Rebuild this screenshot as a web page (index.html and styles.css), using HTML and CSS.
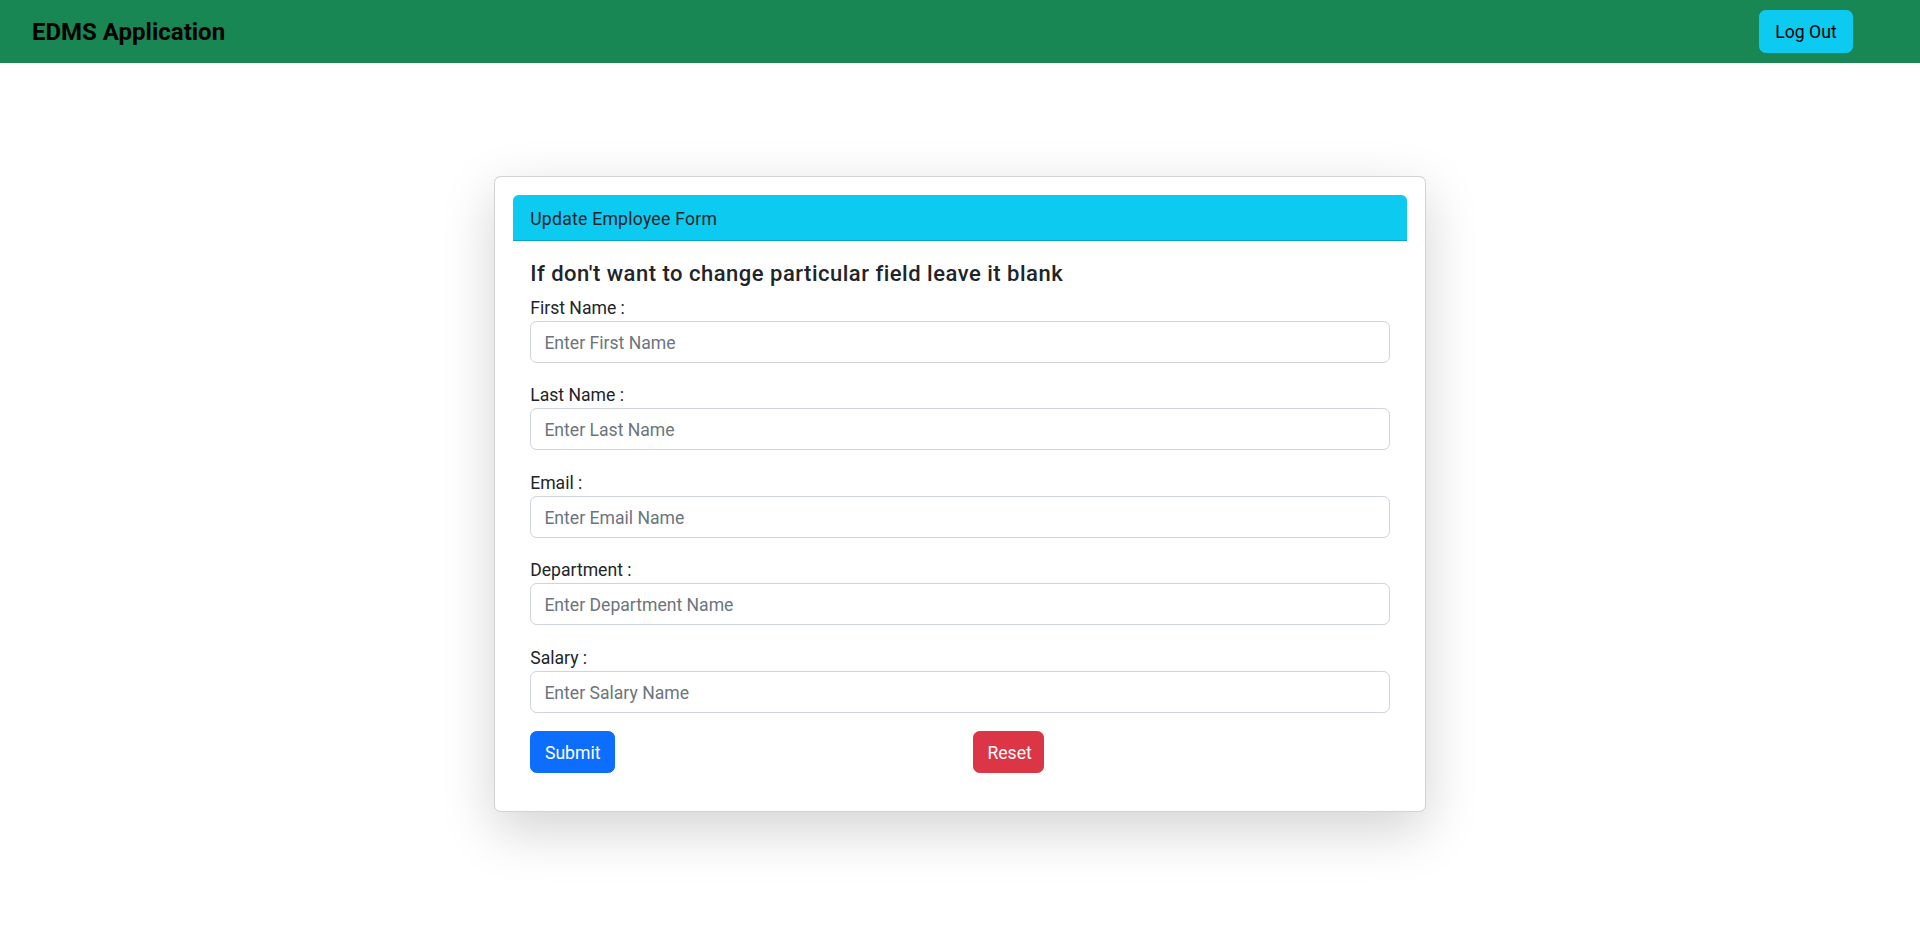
FILE: index.html
```html
<!DOCTYPE html>
<html lang="en">
<head>
<meta charset="utf-8">
<title>EDMS Application</title>
<link rel="stylesheet" href="styles.css">
</head>
<body>
<nav class="navbar">
  <span class="brand">EDMS Application</span>
  <button class="btn btn-info" type="button">Log Out</button>
</nav>
<main class="page">
  <section class="card">
    <div class="card-header">Update Employee Form</div>
    <form class="card-body">
      <h5 class="note">If don't want to change particular field leave it blank</h5>
      <div class="field">
        <label class="label" for="fn">First Name :</label>
        <input class="input" id="fn" type="text" placeholder="Enter First Name">
      </div>
      <div class="field">
        <label class="label" for="ln">Last Name :</label>
        <input class="input" id="ln" type="text" placeholder="Enter Last Name">
      </div>
      <div class="field">
        <label class="label" for="em">Email :</label>
        <input class="input" id="em" type="text" placeholder="Enter Email Name">
      </div>
      <div class="field">
        <label class="label" for="dp">Department :</label>
        <input class="input" id="dp" type="text" placeholder="Enter Department Name">
      </div>
      <div class="field">
        <label class="label" for="sl">Salary :</label>
        <input class="input" id="sl" type="text" placeholder="Enter Salary Name">
      </div>
      <div class="actions">
        <div class="col"><button class="btn btn-primary" type="button">Submit</button></div>
        <div class="col"><button class="btn btn-danger" type="reset">Reset</button></div>
      </div>
    </form>
  </section>
</main>
</body>
</html>
```
FILE: styles.css
```css
* { box-sizing: border-box; }
html, body { margin: 0; padding: 0; }
body {
  font-family: Roboto, "Liberation Sans", sans-serif;
  font-size: 17.6px;
  line-height: 1.5;
  color: #212529;
  background: #fff;
  min-height: 942px;
}
.navbar {
  height: 63px;
  background: #198754;
  display: flex;
  align-items: center;
  justify-content: space-between;
  padding: 0 67px 0 32px;
}
.brand {
  font-size: 24px;
  font-weight: 700;
  color: #000;
  line-height: 1;
}
.btn {
  font-family: inherit;
  font-size: 17.6px;
  line-height: 26.4px;
  height: 42px;
  padding: 7.6px 13.2px 5.6px;
  border: 1px solid transparent;
  border-radius: 6.6px;
  cursor: pointer;
}
.btn-info { background: #0dcaf0; border-color: #0dcaf0; color: #000; width: 94px; height: 43px; }
.btn-primary { background: #0d6efd; border-color: #0d6efd; color: #fff; width: 85px; }
.btn-danger { background: #dc3545; border-color: #dc3545; color: #fff; width: 71px; }
.page { padding: 113px 0 120px; }
.card {
  width: 932px;
  margin: 0 auto;
  padding: 17.6px;
  border: 1px solid rgba(0,0,0,.175);
  border-radius: 6.6px;
  background: #fff;
  box-shadow: 0 17.6px 52.8px rgba(0,0,0,.175);
}
.card-header {
  background: #0dcaf0;
  padding: 11px 17.6px 6.6px;
  line-height: 27.4px;
  letter-spacing: 0.25px;
  border-bottom: 1px solid rgba(0,0,0,.175);
  border-radius: 5.6px 5.6px 0 0;
  color: #212529;
}
.card-body { padding: 20px 17.6px 0; margin: 0; }
.note {
  margin: 0 0 6.4px;
  font-size: 22px;
  font-weight: 500;
  line-height: 26.4px;
  letter-spacing: 0.5px;
}
.field { margin-bottom: 18px; }
.label { display: block; line-height: 25px; padding-top: 2.5px; }
.input {
  display: block;
  width: 100%;
  height: 42px;
  padding: 7.6px 13.2px 5.6px;
  font-family: inherit;
  font-size: 17.6px;
  color: #212529;
  border: 1px solid #ced4da;
  border-radius: 6.6px;
  background: #fff;
}
.input::placeholder { color: #6c757d; }
.actions {
  display: flex;
  margin: 0 -13.2px;
  padding-bottom: 20.5px;
}
.col { flex: 1 1 0; padding: 0 13.2px; }
```
